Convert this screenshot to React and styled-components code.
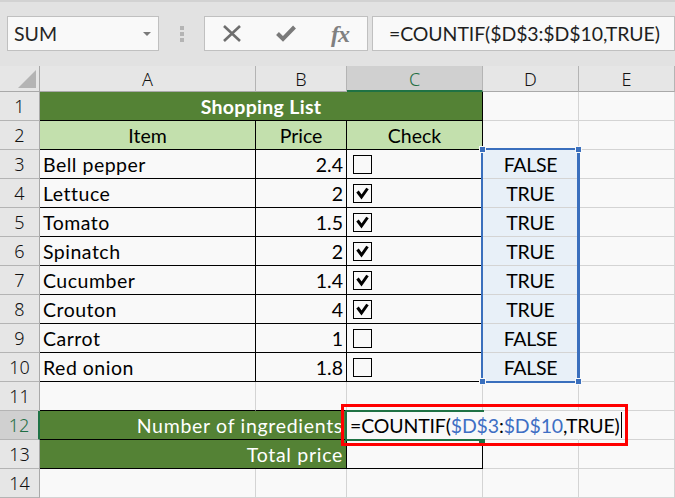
import React from 'react';
import styled, { createGlobalStyle } from 'styled-components';

const Global = createGlobalStyle`
  html, body { margin: 0; padding: 0; background: #f9f9f9; }
  body { width: 675px; height: 498px; overflow: hidden; font-family: Lato, "Liberation Sans", sans-serif; }
`;
const Page = styled.div`width: 675px; height: 498px; display: flex; flex-direction: column; overflow: hidden;`;
const Toolbar = styled.div`
  height: 66px; box-sizing: border-box; background: #e2e2e2; border-top: 2px solid #d2d2d2;
  padding: 14px 0 15px 7px; display: flex; align-items: stretch;
`;
const Field = styled.div`
  box-sizing: border-box; background: #f9f9f9; border: 1px solid #c0c0c0; display: flex; align-items: center;
`;
const NameBox = styled(Field)`width: 152px; padding: 0 7px 0 6px; justify-content: space-between; font-size: 19.5px; color: #262626;`;
const Arrow = styled.span`width: 0; height: 0; border: 4px solid transparent; border-top: 4px solid #7a7a7a; margin: 5px 0 0 0;`;
const Grip = styled.div`width: 45px; display: flex; flex-direction: column; align-items: center; justify-content: center; gap: 2px;`;
const GripDot = styled.span`width: 4px; height: 4px; background: #b4b4b4;`;
const Buttons = styled(Field)`width: 164px; padding: 0;`;
const IconSlot = styled.span`width: 54px; display: flex; justify-content: center;`;
const Fx = styled.span`font-family: "Liberation Serif", serif; font-style: italic; font-weight: 700; font-size: 24px; line-height: 26px; color: #808080; letter-spacing: -1px;`;
const FormulaBar = styled(Field)`margin-left: 4px; flex: 1; padding-left: 16px; font-size: 19.5px; letter-spacing: -0.1px; color: #1f1f1f; white-space: nowrap;`;

const Sheet = styled.div`
  position: relative; display: grid; flex: 1;
  grid-template-columns: 40px 216px 91px 136px 96px 96px;
  grid-template-rows: 26px repeat(14, 29px);
  color: #000; font-size: 19.5px;
`;
const Corner = styled.div`
  background: #e6e6e6; border-right: 1px solid #a9a9a9; border-bottom: 1px solid #a9a9a9; position: relative;
  &::after { content: ''; position: absolute; right: 3px; bottom: 3px; width: 0; height: 0;
    border-style: solid; border-width: 0 0 18px 18px; border-color: transparent transparent #b4b4b4 transparent; }
`;
const ColHead = styled.div`
  box-sizing: border-box; display: flex; align-items: center; justify-content: center;
  font-family: "Noto Sans", sans-serif; font-weight: 300; font-size: 18px; padding-top: 1px;
  background: ${p => p.$active ? '#d0d0d0' : '#e6e6e6'};
  color: ${p => p.$active ? '#1f6e43' : '#111'};
  border-right: 1px solid #b4b4b4;
  border-bottom: ${p => p.$active ? '2px solid #1f7244' : '1px solid #a9a9a9'};
`;
const RowHead = styled.div`
  box-sizing: border-box; display: flex; align-items: center; justify-content: center;
  font-family: "Noto Sans", sans-serif; font-weight: 300; font-size: 18px;
  background: ${p => p.$active ? '#d0d0d0' : '#e6e6e6'};
  color: ${p => p.$active ? '#1f6e43' : '#111'};
  border-right: ${p => p.$active ? '2px solid #1f7244' : '1px solid #a9a9a9'};
  border-bottom: 1px solid #b4b4b4;
`;
const Cell = styled.div`
  box-sizing: border-box; display: flex; align-items: center; min-width: 0; white-space: nowrap;
  padding: 0 3px 0 3px; grid-column: ${p => p.$span ? `span ${p.$span}` : 'auto'};
  justify-content: ${p => p.$align || 'flex-start'};
  background: ${p => p.$bg || 'transparent'};
  color: ${p => p.$color || '#000'};
  font-weight: ${p => p.$bold ? 700 : 400};
  letter-spacing: ${p => p.$track || 0}px;
  border-right: 1px solid ${p => p.$line || '#d4d4d4'};
  border-bottom: 1px solid ${p => p.$lineB || p.$line || '#d4d4d4'};
`;
const Box = styled.span`
  box-sizing: border-box; width: 19px; height: 19px; border: 1px solid #000; margin-left: 3px; display: flex; align-items: center; justify-content: center;
`;
const Selection = styled.div`
  position: absolute; left: 481px; top: 82px; width: 99px; height: 235px; box-sizing: border-box;
  border: 2px solid #3a6fbd; border-right-width: 3px; pointer-events: none;
`;
const Handle = styled.span`
  position: absolute; width: 5px; height: 5px; background: #3a6fbd; outline: 1px solid #f9f9f9;
  ${p => p.$x}: ${p => p.$x === 'right' ? -4 : -3}px; ${p => p.$y}: -3px;
`;
const RedBox = styled.div`
  position: absolute; left: 341px; top: 338px; width: 287px; height: 42px; box-sizing: border-box; border: 3px solid #f00;
`;
const Editor = styled.div`
  position: absolute; left: 345px; top: 344px; width: 139px; height: 31px; box-sizing: border-box;
  border: solid #1f7244; border-width: 2px 0 2px 2px;
`;
const EditorText = styled.div`
  position: absolute; left: 350px; top: 346px; height: 26px; display: flex; align-items: center;
  font-size: 19.5px; letter-spacing: -0.15px; white-space: nowrap; border-right: 1px solid #000; padding-right: 1px;
`;
const Ref = styled.span`color: #3e6fc4;`;
const Grab = styled.span`position: absolute; left: 479px; top: 373px; width: 6px; height: 4px; background: #1f7244;`;

const GREEN = '#548235', LIGHT = '#c3e0ad', SEL = '#e8f0f8', B = '#000';
const rows = [
  ['Bell pepper', '2.4', false, 'FALSE'], ['Lettuce', '2', true, 'TRUE'], ['Tomato', '1.5', true, 'TRUE'],
  ['Spinatch', '2', true, 'TRUE'], ['Cucumber', '1.4', true, 'TRUE'], ['Crouton', '4', true, 'TRUE'],
  ['Carrot', '1', false, 'FALSE'], ['Red onion', '1.8', false, 'FALSE'],
];
const Check = () => (
  <svg width="17" height="17" viewBox="0 0 17 17"><path d="M3.5 6.5 L7.5 12 L13.5 3.5" fill="none" stroke="#000" strokeWidth="3" /></svg>
);
const Blank = () => <><Cell /><Cell /><Cell /><Cell /><Cell /></>;

export default function App() {
  return (
    <Page>
      <Global />
      <Toolbar>
        <NameBox>SUM<Arrow /></NameBox>
        <Grip><GripDot /><GripDot /><GripDot /></Grip>
        <Buttons>
          <IconSlot>
            <svg width="20" height="17" viewBox="0 0 20 17"><path d="M2 1 L18 16 M18 1 L2 16" stroke="#6e6e6e" strokeWidth="2.6" fill="none" /></svg>
          </IconSlot>
          <IconSlot>
            <svg width="20" height="17" viewBox="0 0 20 17"><path d="M1.5 8.5 L7 14 L18.5 2" stroke="#7a7a7a" strokeWidth="4" fill="none" /></svg>
          </IconSlot>
          <IconSlot><Fx>fx</Fx></IconSlot>
        </Buttons>
        <FormulaBar>=COUNTIF($D$3:$D$10,TRUE)</FormulaBar>
      </Toolbar>
      <Sheet>
        <Corner />
        {['A', 'B', 'C', 'D', 'E'].map(c => <ColHead key={c} $active={c === 'C'}>{c}</ColHead>)}

        <RowHead>1</RowHead>
        <Cell $span={3} $align="center" $bg={GREEN} $color="#fff" $bold $track={0.3} $line={B}>Shopping List</Cell>
        <Cell /><Cell />

        <RowHead>2</RowHead>
        <Cell $align="center" $bg={LIGHT} $line={B}>Item</Cell>
        <Cell $align="center" $bg={LIGHT} $line={B}>Price</Cell>
        <Cell $align="center" $bg={LIGHT} $line={B}>Check</Cell>
        <Cell /><Cell />

        {rows.map((r, i) => (
          <React.Fragment key={r[0]}>
            <RowHead>{i + 3}</RowHead>
            <Cell $line={B} $track={0.5}>{r[0]}</Cell>
            <Cell $align="flex-end" $line={B}>{r[1]}</Cell>
            <Cell $line={B}><Box>{r[2] && <Check />}</Box></Cell>
            <Cell $align="center" $bg={SEL} $track={-0.25}>{r[3]}</Cell>
            <Cell />
          </React.Fragment>
        ))}

        <RowHead>11</RowHead>
        <Cell $lineB={B} /><Cell $lineB={B} /><Cell /><Cell /><Cell />

        <RowHead $active>12</RowHead>
        <Cell $span={2} $align="flex-end" $bg={GREEN} $color="#fff" $track={0.7} $line={B}>Number of ingredients</Cell>
        <Cell $line="transparent" $lineB="#d4d4d4" /><Cell $line="transparent" $lineB="#d4d4d4" /><Cell />

        <RowHead>13</RowHead>
        <Cell $span={2} $align="flex-end" $bg={GREEN} $color="#fff" $track={0.7} $line={B}>Total price</Cell>
        <Cell $line={B} /><Cell /><Cell />

        <RowHead>14</RowHead><Blank />

        <Selection>
          <Handle $x="left" $y="top" /><Handle $x="right" $y="top" />
          <Handle $x="left" $y="bottom" /><Handle $x="right" $y="bottom" />
        </Selection>
        <Editor />
        <Grab />
        <EditorText>=COUNTIF(<Ref>$D$3</Ref>:<Ref>$D$10</Ref>,TRUE)</EditorText>
        <RedBox />
      </Sheet>
    </Page>
  );
}
